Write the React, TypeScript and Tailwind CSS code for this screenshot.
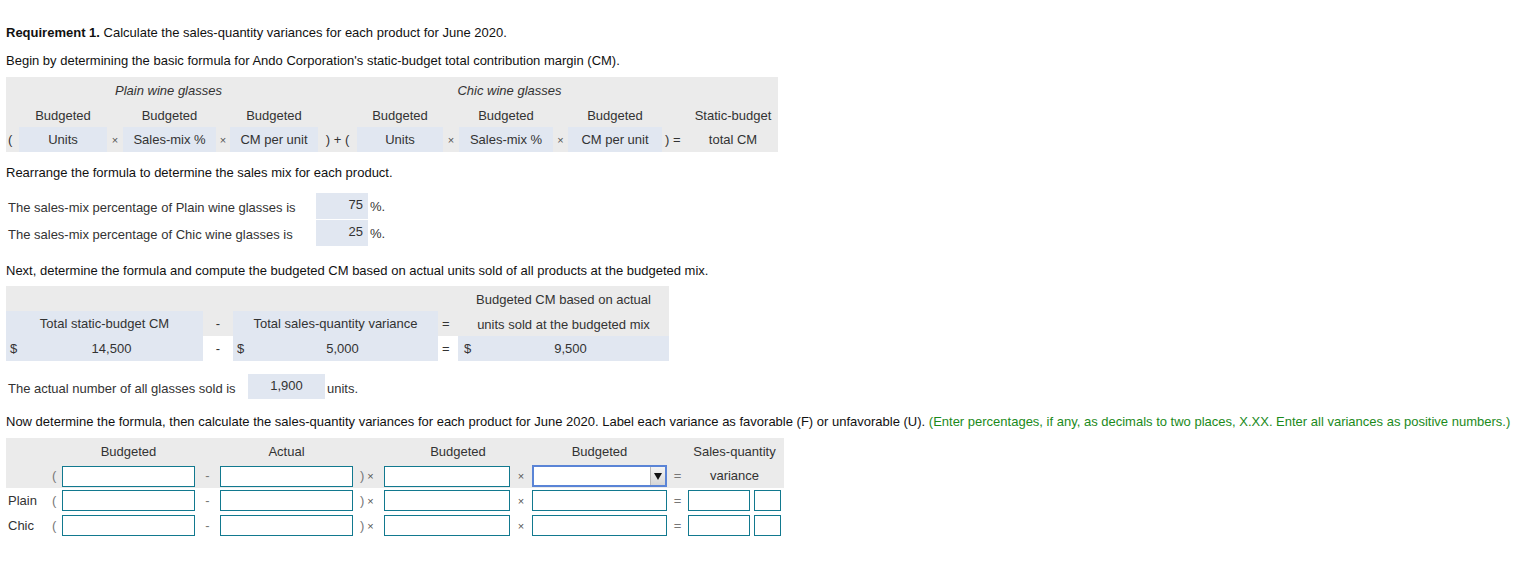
import { ReactNode } from 'react'

const BLUE = 'bg-[#e1e7f1]'
const GREY = 'bg-[#ebebeb]'

function Cell({ children, className = '' }: { children?: ReactNode; className?: string }) {
  return <div className={`flex items-center justify-center whitespace-nowrap ${className}`}>{children}</div>
}

function Box({ className = '' }: { className?: string }) {
  return <div className={`h-[21px] border border-[#12798f] bg-white ${className}`} />
}

function Times() {
  return <span className="text-[11px] text-[#555]">×</span>
}

function Dropdown() {
  return (
    <div className="flex h-[22px] w-[135px] items-stretch border-2 border-[#5a84d6] bg-white">
      <div className="flex-1" />
      <div className="flex w-[15px] items-center justify-center border-l border-[#b8b8b8] bg-gradient-to-b from-[#f4f4f4] to-[#d6d6d6]">
        <svg width="8" height="7" viewBox="0 0 8 7" aria-hidden="true">
          <path d="M0 0H8L4 7Z" fill="#111" />
        </svg>
      </div>
    </div>
  )
}

function FormulaTable() {
  return (
    <div
      className={`mt-[9px] grid w-[772px] grid-cols-[13px_88px_16px_93px_14px_88px_39px_86px_16px_94px_15px_94px_26px_90px] grid-rows-[27px_23px_25px] text-[#333] ${GREY}`}
    >
      <Cell />
      <Cell className="col-span-5 pt-[1px] italic">Plain wine glasses</Cell>
      <Cell />
      <Cell className="col-span-5 pt-[1px] italic">Chic wine glasses</Cell>
      <Cell className="col-span-2" />

      <Cell />
      <Cell>Budgeted</Cell>
      <Cell />
      <Cell>Budgeted</Cell>
      <Cell />
      <Cell>Budgeted</Cell>
      <Cell />
      <Cell>Budgeted</Cell>
      <Cell />
      <Cell>Budgeted</Cell>
      <Cell />
      <Cell>Budgeted</Cell>
      <Cell />
      <Cell>Static-budget</Cell>

      <Cell className="!justify-start pl-[2px]">(</Cell>
      <Cell className={BLUE}>Units</Cell>
      <Cell><Times /></Cell>
      <Cell className={BLUE}>Sales-mix %</Cell>
      <Cell><Times /></Cell>
      <Cell className={BLUE}>CM per unit</Cell>
      <Cell>) + (</Cell>
      <Cell className={BLUE}>Units</Cell>
      <Cell><Times /></Cell>
      <Cell className={BLUE}>Sales-mix %</Cell>
      <Cell><Times /></Cell>
      <Cell className={BLUE}>CM per unit</Cell>
      <Cell className="!justify-start pl-[3px]">) =</Cell>
      <Cell>total CM</Cell>
    </div>
  )
}

function MixRow({ label, value, className = '' }: { label: string; value: string; className?: string }) {
  return (
    <div className={`flex h-[26px] items-stretch text-[#333] ${className}`}>
      <div className="flex w-[310px] items-end pb-[4px] pl-[2px]">{label}</div>
      <div className={`flex w-[52px] items-center justify-end pr-[5px] pb-[2px] ${BLUE}`}>{value}</div>
      <div className="flex items-center pl-[2px] pt-[2px]">%.</div>
    </div>
  )
}

function CmTable() {
  return (
    <div className="mt-[8px] grid w-[663px] grid-cols-[197px_30px_205px_20px_211px] grid-rows-[25px_25px_25px] text-[#333]">
      <Cell className={GREY} />
      <Cell className={GREY} />
      <Cell className={GREY} />
      <Cell className={GREY} />
      <Cell className={`${GREY} pt-[2px]`}>Budgeted CM based on actual</Cell>

      <Cell className={BLUE}>Total static-budget CM</Cell>
      <Cell className={GREY}>-</Cell>
      <Cell className={BLUE}>Total sales-quantity variance</Cell>
      <Cell className={`${GREY} !justify-start pl-[4px]`}>=</Cell>
      <Cell className={`${GREY} pt-[2px]`}>units sold at the budgeted mix</Cell>

      <div className={`flex items-center ${BLUE}`}>
        <span className="w-[14px] pl-[4px]">$</span>
        <span className="flex-1 text-center">14,500</span>
      </div>
      <Cell>-</Cell>
      <div className={`flex items-center ${BLUE}`}>
        <span className="w-[14px] pl-[4px]">$</span>
        <span className="flex-1 text-center">5,000</span>
      </div>
      <Cell className="!justify-start pl-[4px]">=</Cell>
      <div className={`flex items-center ${BLUE}`}>
        <span className="w-[14px] pl-[6px]">$</span>
        <span className="flex-1 text-center">9,500</span>
      </div>
    </div>
  )
}

function VarianceRow({ label, first = false }: { label?: string; first?: boolean }) {
  return (
    <>
      <Cell className="!justify-start pl-[2px]">{label}</Cell>
      <Cell className="!justify-start pl-[4px] text-[#777]">(</Cell>
      <Cell><Box className="w-[133px]" /></Cell>
      <Cell className="text-[#777]">-</Cell>
      <Cell><Box className="w-[133px]" /></Cell>
      <Cell className="!justify-start pl-[7px] text-[#777]">
        ) <span className="ml-[3px]"><Times /></span>
      </Cell>
      <Cell><Box className="w-[126px]" /></Cell>
      <Cell><Times /></Cell>
      <Cell>{first ? <Dropdown /> : <Box className="w-[135px]" />}</Cell>
      <Cell className="text-[#777]">=</Cell>
      {first ? (
        <Cell className="pr-[3px]">variance</Cell>
      ) : (
        <div className="flex items-center gap-[4px]">
          <Box className="w-[62px]" />
          <Box className="w-[27px]" />
        </div>
      )}
    </>
  )
}

function VarianceTable() {
  return (
    <div className="mt-[9px] grid w-[778px] grid-cols-[42px_14px_133px_25px_133px_31px_126px_22px_135px_21px_96px] grid-rows-[26px_24px_25px_25px] text-[#333]">
      <div className={`col-span-11 row-span-2 col-start-1 row-start-1 ${GREY}`} />
      <Cell className="col-start-3 row-start-1 pt-[2px]">Budgeted</Cell>
      <Cell className="col-start-5 row-start-1 pt-[2px]">Actual</Cell>
      <Cell className="col-span-2 col-start-7 row-start-1 pt-[2px]">Budgeted</Cell>
      <Cell className="col-start-9 row-start-1 pt-[2px]">Budgeted</Cell>
      <Cell className="col-start-11 row-start-1 pr-[3px] pt-[2px]">Sales-quantity</Cell>
      <div className="col-span-11 col-start-1 row-start-2 grid grid-cols-subgrid">
        <VarianceRow first />
      </div>
      <div className="col-span-11 col-start-1 row-start-3 grid grid-cols-subgrid">
        <VarianceRow label="Plain" />
      </div>
      <div className="col-span-11 col-start-1 row-start-4 grid grid-cols-subgrid">
        <VarianceRow label="Chic" />
      </div>
    </div>
  )
}

export default function App() {
  return (
    <div className="min-h-[561px] bg-white px-[6px] pt-[26px] text-[13px] leading-[14px] text-[#111] font-['Liberation_Sans',Arial,sans-serif]">
      <p>
        <span className="font-bold">Requirement 1.</span> Calculate the sales-quantity variances for each product for June 2020.
      </p>
      <p className="mt-[14px]">
        Begin by determining the basic formula for Ando Corporation&apos;s static-budget total contribution margin (CM).
      </p>

      <FormulaTable />

      <p className="mt-[14px]">Rearrange the formula to determine the sales mix for each product.</p>

      <MixRow className="mt-[13px]" label="The sales-mix percentage of Plain wine glasses is" value="75" />
      <MixRow className="mt-[1px]" label="The sales-mix percentage of Chic wine glasses is" value="25" />

      <p className="mt-[18px]">
        Next, determine the formula and compute the budgeted CM based on actual units sold of all products at the budgeted mix.
      </p>

      <CmTable />

      <div className="mt-[13px] flex h-[25px] items-stretch text-[#333]">
        <div className="flex w-[242px] items-end pb-[3px] pl-[2px]">The actual number of all glasses sold is</div>
        <div className={`flex w-[77px] items-center justify-center pb-[2px] ${BLUE}`}>1,900</div>
        <div className="flex items-end pb-[3px] pl-[2px]">units.</div>
      </div>

      <p className="mt-[16px]">
        Now determine the formula, then calculate the sales-quantity variances for each product for June 2020. Label each variance as favorable (F) or unfavorable (U).{' '}
        <span className="text-[#1b8a1b]">
          (Enter percentages, if any, as decimals to two places, X.XX. Enter all variances as positive numbers.)
        </span>
      </p>

      <VarianceTable />
    </div>
  )
}
